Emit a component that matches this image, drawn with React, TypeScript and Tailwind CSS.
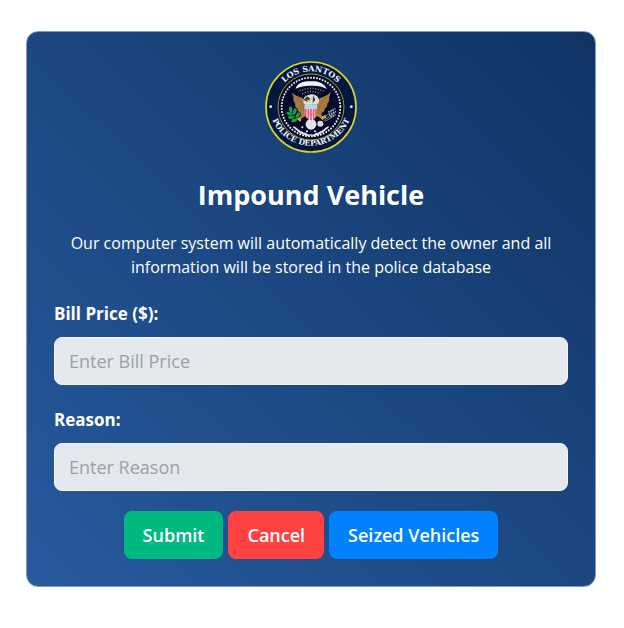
import type { ComponentProps } from 'react';

const wreathLeaves = [-58, -44, -30, -16, 16, 30, 44, 58];

function Seal() {
  return (
    <svg viewBox="0 0 276 276" className="size-[92px]" role="img" aria-label="Los Santos Police Department seal">
      <defs>
        <path id="seal-top" d="M31 138 A107 107 0 0 1 245 138" />
        <path id="seal-bottom" d="M12 128 A126 126 0 1 0 264 128" />
      </defs>
      <circle cx="138" cy="138" r="135" fill="#04183f" stroke="#d9d52e" strokeWidth="5" />
      <circle cx="138" cy="138" r="99" fill="#060b2c" stroke="#a39b2c" strokeWidth="3" />
      <circle cx="138" cy="138" r="88" fill="none" stroke="#e8ecf5" strokeWidth="6" strokeLinecap="round" strokeDasharray="0.1 8.9" />
      <g fill="#eef4fc" fontFamily="'DejaVu Serif', serif" fontWeight="700" textAnchor="middle">
        <text fontSize="24">
          <textPath href="#seal-top" startOffset="50%">LOS SANTOS</textPath>
        </text>
        <text fontSize="23">
          <textPath href="#seal-bottom" startOffset="50%">POLICE DEPARTMENT</textPath>
        </text>
      </g>
      <circle cx="17" cy="137" r="4" fill="#eef4fc" />
      <circle cx="259" cy="137" r="4" fill="#eef4fc" />

      {/* scroll and stars above the eagle */}
      <path d="M92 83 Q98 63 126 61 L152 61 Q176 65 186 84 Q168 73 139 74 Q112 73 92 83Z" fill="#f1f3f5" />
      <path d="M104 90 Q138 74 176 91" fill="none" stroke="#7b8680" strokeWidth="5" strokeDasharray="3 5" />
      <path d="M112 99 Q138 84 166 99" fill="none" stroke="#a0a8a8" strokeWidth="4" strokeDasharray="3 5" />

      {/* wings */}
      <path d="M80 93 Q86 102 104 108 Q121 113 126 131 L124 165 L112 168 Q105 162 107 155 Q96 151 98 143 Q88 137 91 128 Q82 118 86 110Z" fill="#a87843" />
      <path d="M197 93 Q190 102 174 108 Q155 113 151 131 L153 165 L165 168 Q172 162 170 155 Q181 151 179 143 Q188 137 187 128 Q195 118 192 110Z" fill="#a87843" />
      <path d="M94 110 Q111 121 118 150 M184 110 Q166 121 160 150" fill="none" stroke="#8a6035" strokeWidth="2" />

      {/* head */}
      <path d="M116 126 Q112 105 130 102 Q150 95 160 111 Q167 123 154 131 L122 132Z" fill="#dce3dd" />
      <path d="M126 106 L137 113 L126 122 L116 117Z M144 103 L151 116 L143 127" fill="#373e40" />
      <path d="M125 116 L139 117 L131 125Z" fill="#dfc244" />

      {/* legs and tail */}
      <path d="M119 160 L101 175 M157 160 L175 172" stroke="#b78539" strokeWidth="8" />
      <path d="M96 173 l12 6 M170 172 l13 -4" stroke="#d7bd38" strokeWidth="6" />
      <circle cx="138" cy="190" r="16" fill="#e7e9ef" />
      <circle cx="166" cy="188" r="9" fill="#d9dde5" />
      <path d="M138 176 v27 M130 181 v18 M146 181 v18" stroke="#adb3c2" strokeWidth="1" />

      {/* shield */}
      <path d="M119 132 H156 V157 Q154 172 138 180 Q121 172 119 157Z" fill="#f6dfe6" />
      <path d="M122 142 V166 M130 142 V174 M138 142 V178 M146 142 V174 M153 142 V166" stroke="#ee536e" strokeWidth="5" />
      <path d="M119 132 H156 V144 H119Z" fill="#a8dcef" />

      {/* olive branch */}
      <path d="M76 143 Q80 164 103 180" fill="none" stroke="#128b35" strokeWidth="3" />
      <g fill="#16a340">
        <ellipse cx="77" cy="145" rx="5" ry="9" transform="rotate(-12 77 145)" />
        <ellipse cx="89" cy="151" rx="5" ry="10" transform="rotate(22 89 151)" />
        <ellipse cx="73" cy="158" rx="9" ry="5" transform="rotate(22 73 158)" />
        <ellipse cx="99" cy="162" rx="5" ry="9" transform="rotate(30 99 162)" />
        <ellipse cx="78" cy="169" rx="9" ry="5" />
        <ellipse cx="88" cy="178" rx="9" ry="5" transform="rotate(-15 88 178)" />
      </g>

      {/* arrows */}
      <path d="M171 177 L206 144 M176 179 L211 153 M180 181 L209 164" stroke="#828791" strokeWidth="3" />
      <path d="M190 153 L211 143 M192 162 L213 151 M197 168 L211 160" stroke="#babec5" strokeWidth="5" strokeDasharray="4 3" />
      <path d="M170 174 L182 163" stroke="#d7bd38" strokeWidth="5" />

      {/* lower wreath */}
      <path d="M92 203 Q112 225 138 222 Q164 225 184 203" fill="none" stroke="#d9deec" strokeWidth="4" />
      {wreathLeaves.map((x) => (
        <g key={x} fill="#d9deec">
          <ellipse cx={138 + x * 0.8} cy={222 - x * x * 0.006} rx="9" ry="3" transform={`rotate(${x > 0 ? -35 : 35} ${138 + x * 0.8} ${222 - x * x * 0.006})`} />
        </g>
      ))}
      <circle cx="112" cy="199" r="3" fill="#e8ecf5" />
      <circle cx="150" cy="211" r="3" fill="#e8ecf5" />
      <circle cx="126" cy="211" r="3" fill="#e8ecf5" />
    </svg>
  );
}

function Field({ label, id, ...props }: { label: string; id: string } & ComponentProps<'input'>) {
  return (
    <div className="mb-5 flex flex-col gap-2">
      <label htmlFor={id} className="text-[17px] leading-[30px] font-bold">
        {label}
      </label>
      <input
        id={id}
        className="h-12 w-full rounded-lg border border-gray-100 bg-[#e5e8ec] px-3.5 text-lg text-gray-700 placeholder:text-gray-400"
        {...props}
      />
    </div>
  );
}

function ActionButton({ className, ...props }: ComponentProps<'button'>) {
  return <button className={`h-12 rounded-lg px-[19px] text-lg font-semibold ${className}`} {...props} />;
}

export default function App() {
  return (
    <main className="bg-white py-[31px] pr-7 pl-[26px] font-['Open_Sans','Noto_Sans',sans-serif] text-white">
      <form
        className="rounded-xl border border-[#7f9cc0] bg-linear-to-tr from-[#285a9f] to-[#0f3464] px-[27px] pt-[29px] pb-[27px]"
        onSubmit={(event) => event.preventDefault()}
      >
        <header className="flex flex-col items-center text-center">
          <Seal />
          <h1 className="mt-6 text-[27px] leading-9 font-bold">Impound Vehicle</h1>
          <p className="mt-[18px] mb-5 text-base leading-6">
            Our computer system will automatically detect the owner and all information will be stored in the police database
          </p>
        </header>
        <Field id="bill-price" label="Bill Price ($):" type="text" placeholder="Enter Bill Price" />
        <Field id="reason" label="Reason:" type="text" placeholder="Enter Reason" />
        <div className="flex flex-wrap justify-center gap-[5px]">
          <ActionButton type="submit" className="bg-[#00b981]">Submit</ActionButton>
          <ActionButton type="button" className="bg-[#ff4242]">Cancel</ActionButton>
          <ActionButton type="button" className="bg-[#0082ff]">Seized Vehicles</ActionButton>
        </div>
      </form>
    </main>
  );
}
